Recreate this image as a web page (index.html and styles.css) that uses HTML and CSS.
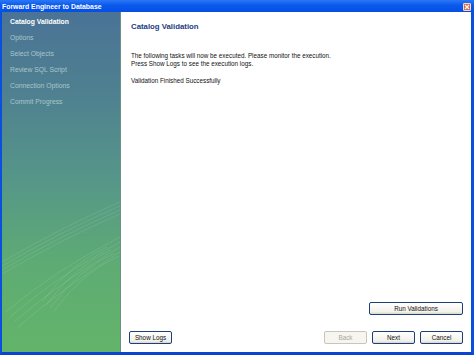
FILE: index.html
```html
<!DOCTYPE html>
<html lang="en">
<head>
    <meta charset="UTF-8">
    <title>Forward Engineer to Database</title>
    <link rel="stylesheet" href="styles.css">
</head>
<body>
    <div class="window">
        <!-- Title bar -->
        <div class="titlebar">
            <span class="title">Forward Engineer to Database</span>
            <span class="close">
                <svg width="8" height="8" viewBox="0 0 8 8">
                    <path d="M2 2 L6 6 M6 2 L2 6" stroke="#fff" stroke-width="1.2"/>
                </svg>
            </span>
        </div>

        <div class="frame">
            <!-- Step list -->
            <div class="sidebar">
                <ul class="steps">
                    <li class="step active">Catalog Validation</li>
                    <li class="step">Options</li>
                    <li class="step">Select Objects</li>
                    <li class="step">Review SQL Script</li>
                    <li class="step">Connection Options</li>
                    <li class="step">Commit Progress</li>
                </ul>
                <svg class="swoosh" width="118" height="340" viewBox="0 0 118 340">
                    <g fill="none" stroke="#ffffff" stroke-opacity="0.13" stroke-width="0.8">
                        <path d="M0 250 Q60 215 118 190"/>
                        <path d="M0 254 Q60 219 118 194"/>
                        <path d="M0 258 Q60 223 118 198"/>
                        <path d="M0 262 Q60 227 118 202"/>
                        <path d="M4 300 Q50 260 118 225"/>
                        <path d="M8 305 Q54 265 118 230"/>
                        <path d="M12 310 Q58 270 118 235"/>
                        <path d="M16 315 Q62 275 118 240"/>
                        <path d="M40 290 Q70 250 105 235"/>
                        <path d="M44 293 Q74 253 109 238"/>
                        <path d="M48 296 Q78 256 113 241"/>
                        <path d="M52 299 Q82 259 117 244"/>
                    </g>
                </svg>
            </div>

            <!-- Page -->
            <div class="page">
                <h1 class="page-title">Catalog Validation</h1>
                <p class="intro">The following tasks will now be executed. Please monitor the execution.<br>Press Show Logs to see the execution logs.</p>
                <p class="status">Validation Finished Successfully</p>

                <div class="spacer"></div>

                <div class="run-row">
                    <button type="button" class="btn wide">Run Validations</button>
                </div>

                <div class="nav-row">
                    <button type="button" class="btn">Show Logs</button>
                    <div class="nav-right">
                        <button type="button" class="btn" disabled>Back</button>
                        <button type="button" class="btn">Next</button>
                        <button type="button" class="btn">Cancel</button>
                    </div>
                </div>
            </div>
        </div>
    </div>
</body>
</html>
```

FILE: styles.css
```css
body {
    margin: 0;
    font-family: "Liberation Sans", Arial, sans-serif;
    background: #0a4fe0;
}

.window {
    width: 474px;
    height: 355px;
    display: flex;
    flex-direction: column;
    overflow: hidden;
}

.titlebar {
    height: 12px;
    flex: none;
    display: flex;
    align-items: center;
    justify-content: space-between;
    padding: 0 3px 0 2px;
    background: linear-gradient(#2a78f6, #0a58ec 45%, #0550e4);
    color: #fff;
}

.title {
    font-size: 6.9px;
    font-weight: bold;
}

.close {
    width: 8px;
    height: 8px;
    display: flex;
    border: 1px solid #f4d8cc;
    border-radius: 1px;
    background: #d9653f;
    box-sizing: border-box;
    margin-top: 2px;
}

.close svg {
    margin: -1px;
}

.frame {
    flex: 1;
    display: flex;
    border-left: 2px solid #0a4fe0;
    border-right: 3px solid #0a4fe0;
    border-bottom: 3px solid #0a44d0;
}

.sidebar {
    width: 118px;
    flex: none;
    position: relative;
    border-right: 1px solid #6d8f8a;
    background: linear-gradient(#4a7396 0%, #4f8190 25%, #569788 50%, #5eac73 75%, #63b46a 100%);
    overflow: hidden;
}

.steps {
    list-style: none;
    margin: 0;
    padding: 2px 0 0 8px;
    position: relative;
    z-index: 1;
}

.step {
    height: 16px;
    line-height: 16px;
    font-size: 6.8px;
    color: #aac5cb;
}

.step.active {
    color: #fff;
    font-weight: bold;
}

.swoosh {
    position: absolute;
    left: 0;
    top: 0;
}

.page {
    flex: 1;
    display: flex;
    flex-direction: column;
    background: #fff;
    padding: 10px 8px 8px 8px;
    font-size: 6.3px;
    color: #111;
}

.page-title {
    margin: 0 0 0 2px;
    font-size: 7.8px;
    font-weight: bold;
    color: #1d3c83;
}

.intro {
    margin: 21px 0 0 2px;
    line-height: 8px;
}

.status {
    margin: 9px 0 0 2px;
    line-height: 8px;
}

.spacer {
    flex: 1;
}

.run-row {
    display: flex;
    justify-content: flex-end;
    margin-bottom: 16px;
}

.nav-row {
    display: flex;
    justify-content: space-between;
    align-items: center;
}

.nav-right {
    display: flex;
    gap: 5px;
}

.btn {
    width: 43px;
    height: 13px;
    padding: 0;
    font-family: "Liberation Sans", Arial, sans-serif;
    font-size: 6.3px;
    color: #111;
    border: 1px solid #1e3f78;
    border-radius: 2px;
    background: linear-gradient(#ffffff, #f2f1ea 80%, #d8d6cc);
}

.btn.wide {
    width: 94px;
}

.btn:disabled {
    color: #a9a79c;
    border-color: #c8c6bb;
    background: #f6f5f0;
}
```
